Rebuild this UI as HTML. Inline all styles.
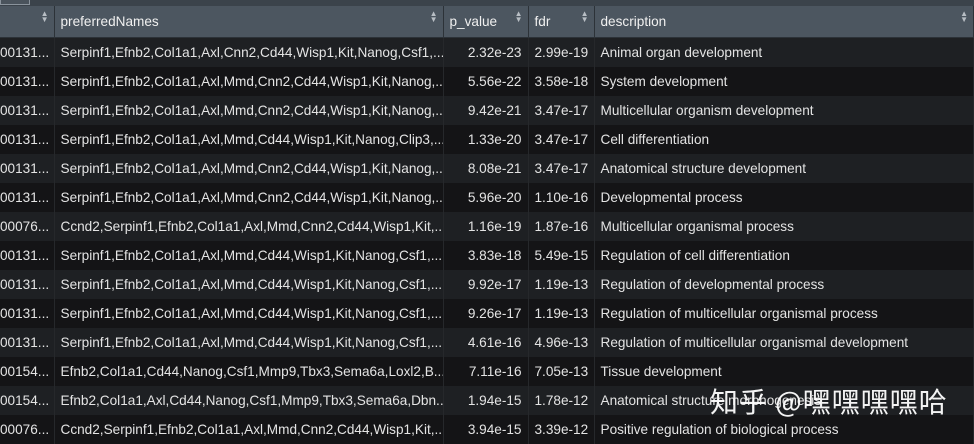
<!DOCTYPE html>
<html><head><meta charset="utf-8"><style>
body{margin:0;width:974px;height:442px;overflow:hidden;background:#18191b;font-family:"Liberation Sans","Noto Sans CJK SC",sans-serif;}
.top{position:absolute;left:0;top:0;width:974px;height:6px;background:#3b434b;border-bottom:1px solid #2a2f34}
.top .b{position:absolute;left:0;top:0;width:28px;height:4px;border:1px solid #8a939c;border-top:none;background:#4a535c}
table{position:absolute;top:6px;left:0;border-collapse:collapse;table-layout:fixed;width:974px;font-size:13.6px;color:#e4e4e4}
th{background:#4c5660;color:#f0f0f0;font-weight:normal;text-align:left;height:31px;padding:0 6px;border-right:1px solid #2c3238;border-bottom:1px solid #2c3238;position:relative}
th .s{position:absolute;right:5px;top:5px;font-size:8px;color:#b8bec4;line-height:6px}
td{height:29px;padding:0 6px;white-space:nowrap;overflow:hidden;border-right:1px solid #26282b}
tr:nth-child(odd) td{background:#141416}
tr:nth-child(even) td{background:#1e2023}
td.r{text-align:right}
td.f{padding-left:0;text-overflow:clip}
.wm{position:absolute;left:710px;top:381px;font-size:28px;color:#fff;font-family:"Noto Sans CJK SC",sans-serif;letter-spacing:1px;opacity:.95}
</style></head><body>
<div class="top"><div class="b"></div></div>
<table>
<colgroup><col style="width:54px"><col style="width:389px"><col style="width:85px"><col style="width:66px"><col></colgroup>
<tr><th><span class="s">▲<br>▼</span></th><th>preferredNames<span class="s">▲<br>▼</span></th><th>p_value<span class="s">▲<br>▼</span></th><th>fdr<span class="s">▲<br>▼</span></th><th>description<span class="s">▲<br>▼</span></th></tr>
<tr><td class="f">00131...</td><td>Serpinf1,Efnb2,Col1a1,Axl,Cnn2,Cd44,Wisp1,Kit,Nanog,Csf1,...</td><td class="r">2.32e-23</td><td class="r">2.99e-19</td><td>Animal organ development</td></tr>
<tr><td class="f">00131...</td><td>Serpinf1,Efnb2,Col1a1,Axl,Mmd,Cnn2,Cd44,Wisp1,Kit,Nanog,...</td><td class="r">5.56e-22</td><td class="r">3.58e-18</td><td>System development</td></tr>
<tr><td class="f">00131...</td><td>Serpinf1,Efnb2,Col1a1,Axl,Mmd,Cnn2,Cd44,Wisp1,Kit,Nanog,...</td><td class="r">9.42e-21</td><td class="r">3.47e-17</td><td>Multicellular organism development</td></tr>
<tr><td class="f">00131...</td><td>Serpinf1,Efnb2,Col1a1,Axl,Mmd,Cd44,Wisp1,Kit,Nanog,Clip3,...</td><td class="r">1.33e-20</td><td class="r">3.47e-17</td><td>Cell differentiation</td></tr>
<tr><td class="f">00131...</td><td>Serpinf1,Efnb2,Col1a1,Axl,Mmd,Cnn2,Cd44,Wisp1,Kit,Nanog,...</td><td class="r">8.08e-21</td><td class="r">3.47e-17</td><td>Anatomical structure development</td></tr>
<tr><td class="f">00131...</td><td>Serpinf1,Efnb2,Col1a1,Axl,Mmd,Cnn2,Cd44,Wisp1,Kit,Nanog,...</td><td class="r">5.96e-20</td><td class="r">1.10e-16</td><td>Developmental process</td></tr>
<tr><td class="f">00076...</td><td>Ccnd2,Serpinf1,Efnb2,Col1a1,Axl,Mmd,Cnn2,Cd44,Wisp1,Kit,...</td><td class="r">1.16e-19</td><td class="r">1.87e-16</td><td>Multicellular organismal process</td></tr>
<tr><td class="f">00131...</td><td>Serpinf1,Efnb2,Col1a1,Axl,Mmd,Cd44,Wisp1,Kit,Nanog,Csf1,...</td><td class="r">3.83e-18</td><td class="r">5.49e-15</td><td>Regulation of cell differentiation</td></tr>
<tr><td class="f">00131...</td><td>Serpinf1,Efnb2,Col1a1,Axl,Mmd,Cd44,Wisp1,Kit,Nanog,Csf1,...</td><td class="r">9.92e-17</td><td class="r">1.19e-13</td><td>Regulation of developmental process</td></tr>
<tr><td class="f">00131...</td><td>Serpinf1,Efnb2,Col1a1,Axl,Mmd,Cd44,Wisp1,Kit,Nanog,Csf1,...</td><td class="r">9.26e-17</td><td class="r">1.19e-13</td><td>Regulation of multicellular organismal process</td></tr>
<tr><td class="f">00131...</td><td>Serpinf1,Efnb2,Col1a1,Axl,Mmd,Cd44,Wisp1,Kit,Nanog,Csf1,...</td><td class="r">4.61e-16</td><td class="r">4.96e-13</td><td>Regulation of multicellular organismal development</td></tr>
<tr><td class="f">00154...</td><td>Efnb2,Col1a1,Cd44,Nanog,Csf1,Mmp9,Tbx3,Sema6a,Loxl2,B...</td><td class="r">7.11e-16</td><td class="r">7.05e-13</td><td>Tissue development</td></tr>
<tr><td class="f">00154...</td><td>Efnb2,Col1a1,Axl,Cd44,Nanog,Csf1,Mmp9,Tbx3,Sema6a,Dbn...</td><td class="r">1.94e-15</td><td class="r">1.78e-12</td><td>Anatomical structure morphogenesis</td></tr>
<tr><td class="f">00076...</td><td>Ccnd2,Serpinf1,Efnb2,Col1a1,Axl,Mmd,Cnn2,Cd44,Wisp1,Kit,...</td><td class="r">3.94e-15</td><td class="r">3.39e-12</td><td>Positive regulation of biological process</td></tr>
</table>
<div class="wm">知乎 @嘿嘿嘿嘿哈</div>
</body></html>
